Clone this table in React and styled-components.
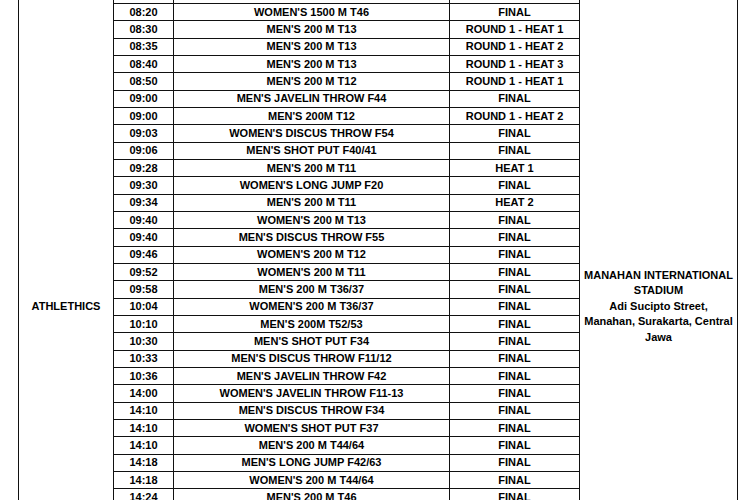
import React from "react";
import styled, { createGlobalStyle } from "styled-components";

const GlobalStyle = createGlobalStyle`
  html, body {
    margin: 0;
    padding: 0;
    background: #ffffff;
    overflow: hidden;
  }
  body {
    font-family: "Liberation Sans", Arial, sans-serif;
    color: #000;
  }
`;

const ROW_H = 17.33;

// rows above / below the visible part of the sheet (scrolled off screen)
const before = [["", "", ""]];

const rows = [
  ["08:20", "WOMEN'S 1500 M T46", "FINAL"],
  ["08:30", "MEN'S 200 M T13", "ROUND 1 - HEAT 1"],
  ["08:35", "MEN'S 200 M T13", "ROUND 1 - HEAT 2"],
  ["08:40", "MEN'S 200 M T13", "ROUND 1 - HEAT 3"],
  ["08:50", "MEN'S 200 M T12", "ROUND 1 - HEAT 1"],
  ["09:00", "MEN'S JAVELIN THROW F44", "FINAL"],
  ["09:00", "MEN'S 200M T12", "ROUND 1 - HEAT 2"],
  ["09:03", "WOMEN'S DISCUS THROW F54", "FINAL"],
  ["09:06", "MEN'S SHOT PUT F40/41", "FINAL"],
  ["09:28", "MEN'S 200 M T11", "HEAT 1"],
  ["09:30", "WOMEN'S LONG JUMP F20", "FINAL"],
  ["09:34", "MEN'S 200 M T11", "HEAT 2"],
  ["09:40", "WOMEN'S 200 M T13", "FINAL"],
  ["09:40", "MEN'S DISCUS THROW F55", "FINAL"],
  ["09:46", "WOMEN'S 200 M T12", "FINAL"],
  ["09:52", "WOMEN'S 200 M T11", "FINAL"],
  ["09:58", "MEN'S 200 M T36/37", "FINAL"],
  ["10:04", "WOMEN'S 200 M T36/37", "FINAL"],
  ["10:10", "MEN'S 200M T52/53", "FINAL"],
  ["10:30", "MEN'S SHOT PUT F34", "FINAL"],
  ["10:33", "MEN'S DISCUS THROW F11/12", "FINAL"],
  ["10:36", "MEN'S JAVELIN THROW F42", "FINAL"],
  ["14:00", "WOMEN'S JAVELIN THROW F11-13", "FINAL"],
  ["14:10", "MEN'S DISCUS THROW F34", "FINAL"],
  ["14:10", "WOMEN'S SHOT PUT F37", "FINAL"],
  ["14:10", "MEN'S 200 M T44/64", "FINAL"],
  ["14:18", "MEN'S LONG JUMP F42/63", "FINAL"],
  ["14:18", "WOMEN'S 200 M T44/64", "FINAL"],
  ["14:24", "MEN'S 200 M T46", "FINAL"],
];

const after = Array.from({ length: 7 }, () => ["", "", ""]);

const allRows = [...before, ...rows, ...after];

const Viewport = styled.div`
  width: 750px;
  height: 500px;
  overflow: hidden;
`;

const ScheduleTable = styled.table`
  margin: -14.33px 0 0 18px;
  width: 719px;
  border-collapse: collapse;
  table-layout: fixed;
`;

const Row = styled.tr`
  height: ${ROW_H}px;
`;

const Cell = styled.td`
  border: 1px solid #111;
  padding: 0 2px;
  height: ${ROW_H}px;
  box-sizing: border-box;
  text-align: center;
  vertical-align: middle;
  font-size: 11px;
  font-weight: 700;
  line-height: 15px;
  white-space: nowrap;
  overflow: hidden;
`;

const SpanCell = styled.td`
  border: 1px solid #111;
  padding: 0 2px;
  text-align: center;
  vertical-align: middle;
  font-size: 11px;
  font-weight: 700;
  line-height: ${(p) => p.$lh || 15}px;
`;

const Venue = styled.div`
  display: flex;
  flex-direction: column;
  align-items: center;
`;

const VenueName = styled.span`
  text-transform: uppercase;
`;

export default function App() {
  return (
    <>
      <GlobalStyle />
      <Viewport>
        <ScheduleTable>
          <colgroup>
            <col style={{ width: 95 }} />
            <col style={{ width: 60 }} />
            <col style={{ width: 276 }} />
            <col style={{ width: 130 }} />
            <col style={{ width: 158 }} />
          </colgroup>
          <tbody>
            {allRows.map(([time, event, round], i) => (
              <Row key={i}>
                {i === 0 && <SpanCell rowSpan={allRows.length}>ATHLETHICS</SpanCell>}
                <Cell>{time}</Cell>
                <Cell>{event}</Cell>
                <Cell>{round}</Cell>
                {i === 0 && (
                  <SpanCell rowSpan={allRows.length} $lh={15.5}>
                    <Venue>
                      <VenueName>Manahan International</VenueName>
                      <VenueName>Stadium</VenueName>
                      <span>Adi Sucipto Street,</span>
                      <span>Manahan, Surakarta, Central</span>
                      <span>Jawa</span>
                    </Venue>
                  </SpanCell>
                )}
              </Row>
            ))}
          </tbody>
        </ScheduleTable>
      </Viewport>
    </>
  );
}
